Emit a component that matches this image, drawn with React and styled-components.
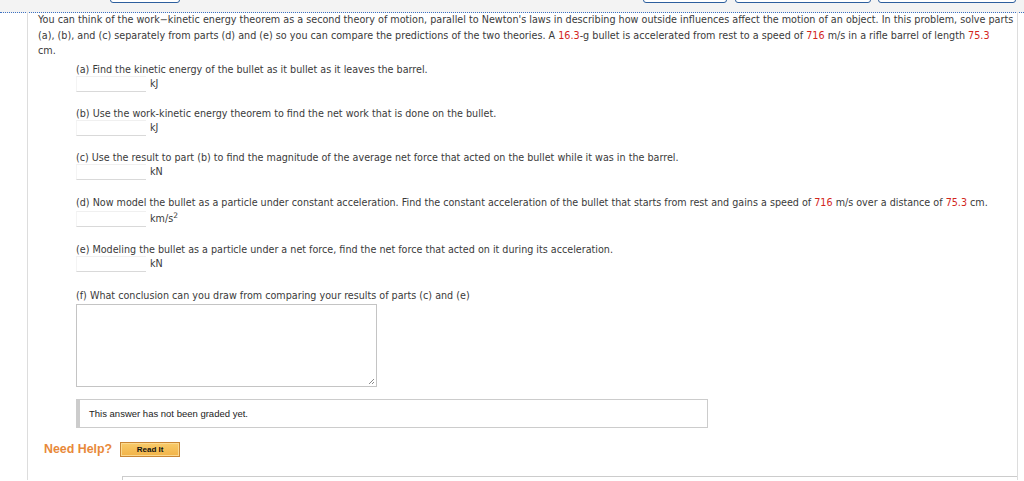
import styled, { createGlobalStyle } from "styled-components";

const GlobalStyle = createGlobalStyle`
  html, body {
    margin: 0;
    padding: 0;
    background: #ffffff;
  }
  body {
    font-family: "DejaVu Sans", Verdana, sans-serif;
    color: #3a3a3a;
  }
`;

const TopStrip = styled.div`
  display: flex;
  align-items: flex-start;
  height: 12px;
  padding: 0 8px 0 110px;
  background: #f3f3f3;
  border-bottom: 1px dotted #3d72c2;
  overflow: hidden;
`;

const TabButton = styled.div`
  width: ${({ $w }) => $w}px;
  height: 11px;
  margin-top: -8px;
  margin-left: ${({ $ml }) => $ml || 0}px;
  box-sizing: border-box;
  border: 1px solid #2d5f9e;
  border-radius: 3px;
  background: #ffffff;
`;

const Spacer = styled.div`
  flex: 1;
`;

const Panel = styled.div`
  margin-left: 27px;
  width: 991px;
  box-sizing: border-box;
  border-left: 1px solid #dddddd;
  border-right: 1px solid #dddddd;
  padding: 0 0 0 10px;
  height: 468px;
`;

const Intro = styled.p`
  margin: -1px 0 0;
  font-size: 9.65px;
  line-height: 15.5px;
  white-space: nowrap;
`;

const Red = styled.span`
  color: #d3261d;
`;

const Parts = styled.div`
  padding-left: 38px;
  margin-top: 4px;
`;

const Part = styled.div`
  margin-bottom: ${({ $mb }) => ($mb === undefined ? 15 : $mb)}px;
`;

const Question = styled.div`
  font-size: 9.6px;
  line-height: 13px;
`;

const AnswerRow = styled.div`
  display: flex;
  align-items: center;
  height: 16px;
  margin-top: ${({ $mt }) => $mt || 0}px;
`;

const AnswerInput = styled.div`
  width: 70px;
  height: 16px;
  box-sizing: border-box;
  border-top: 1px solid #f0f0f0;
  border-left: 1px solid #f4f4f4;
  border-bottom: 1px solid #d9d9d9;
`;

const Unit = styled.span`
  margin-left: 4px;
  font-size: 9.6px;
  line-height: 12px;

  sup {
    font-size: 7.5px;
    line-height: 0;
  }
`;

const TextArea = styled.div`
  position: relative;
  width: 301px;
  height: 83px;
  margin-top: 2px;
  box-sizing: border-box;
  border: 1px solid #c4c4c4;
`;

const Grip = styled.svg`
  position: absolute;
  right: 1px;
  bottom: 1px;
`;

const GradedBox = styled.div`
  width: 632px;
  height: 29px;
  margin-top: 12px;
  box-sizing: border-box;
  border: 1px solid #cccccc;
  border-left: 4px solid #cccccc;
  display: flex;
  align-items: center;
  padding-left: 9px;
  font-family: "Liberation Sans", Arial, sans-serif;
  font-size: 9.5px;
  color: #222222;
`;

const HelpRow = styled.div`
  display: flex;
  align-items: center;
  gap: 8px;
  margin: 14px 0 0 6px;
`;

const HelpLabel = styled.span`
  font-family: "Liberation Sans", Arial, sans-serif;
  font-size: 12.4px;
  font-weight: bold;
  color: #e8893a;
`;

const ReadButton = styled.div`
  width: 60px;
  height: 15px;
  box-sizing: border-box;
  border: 1px solid #c98634;
  background: linear-gradient(#f8cb6a, #f2b348);
  box-shadow: inset 0 0 0 1px #fbd98f;
  display: flex;
  align-items: center;
  justify-content: center;
  font-family: "Liberation Sans", Arial, sans-serif;
  font-size: 8px;
  font-weight: bold;
  color: #111111;
`;

const NextBox = styled.div`
  margin: 19px 0 0 84px;
  height: 20px;
  border-top: 1px solid #cccccc;
  border-left: 1px solid #cccccc;
`;

export default function App() {
  return (
    <>
      <GlobalStyle />
      <TopStrip>
        <TabButton $w={70} />
        <Spacer />
        <TabButton $w={84} />
        <TabButton $w={136} $ml={8} />
        <TabButton $w={138} $ml={7} />
      </TopStrip>
      <Panel>
        <Intro>
          You can think of the work−kinetic energy theorem as a second theory of motion, parallel to Newton's laws in
          describing how outside influences affect the motion of an object. In this problem, solve parts
          <br />
          (a), (b), and (c) separately from parts (d) and (e) so you can compare the predictions of the two theories. A{" "}
          <Red>16.3</Red>-g bullet is accelerated from rest to a speed of <Red>716</Red> m/s in a rifle barrel of length{" "}
          <Red>75.3</Red>
          <br />
          cm.
        </Intro>
        <Parts>
          <Part>
            <Question>(a) Find the kinetic energy of the bullet as it bullet as it leaves the barrel.</Question>
            <AnswerRow>
              <AnswerInput />
              <Unit>kJ</Unit>
            </AnswerRow>
          </Part>
          <Part>
            <Question>(b) Use the work-kinetic energy theorem to find the net work that is done on the bullet.</Question>
            <AnswerRow>
              <AnswerInput />
              <Unit>kJ</Unit>
            </AnswerRow>
          </Part>
          <Part $mb={16}>
            <Question>
              (c) Use the result to part (b) to find the magnitude of the average net force that acted on the bullet while
              it was in the barrel.
            </Question>
            <AnswerRow>
              <AnswerInput />
              <Unit>kN</Unit>
            </AnswerRow>
          </Part>
          <Part $mb={16}>
            <Question>
              (d) Now model the bullet as a particle under constant acceleration. Find the constant acceleration of the
              bullet that starts from rest and gains a speed of <Red>716</Red> m/s over a distance of <Red>75.3</Red> cm.
            </Question>
            <AnswerRow $mt={2}>
              <AnswerInput />
              <Unit>
                km/s<sup>2</sup>
              </Unit>
            </AnswerRow>
          </Part>
          <Part $mb={17}>
            <Question>
              (e) Modeling the bullet as a particle under a net force, find the net force that acted on it during its
              acceleration.
            </Question>
            <AnswerRow>
              <AnswerInput />
              <Unit>kN</Unit>
            </AnswerRow>
          </Part>
          <Part $mb={0}>
            <Question>(f) What conclusion can you draw from comparing your results of parts (c) and (e)</Question>
            <TextArea>
              <Grip width="7" height="7" viewBox="0 0 7 7">
                <path d="M6 1 L1 6 M6 4 L4 6" stroke="#8a8a8a" strokeWidth="1" />
              </Grip>
            </TextArea>
          </Part>
          <GradedBox>This answer has not been graded yet.</GradedBox>
        </Parts>
        <HelpRow>
          <HelpLabel>Need Help?</HelpLabel>
          <ReadButton>Read It</ReadButton>
        </HelpRow>
        <NextBox />
      </Panel>
    </>
  );
}
